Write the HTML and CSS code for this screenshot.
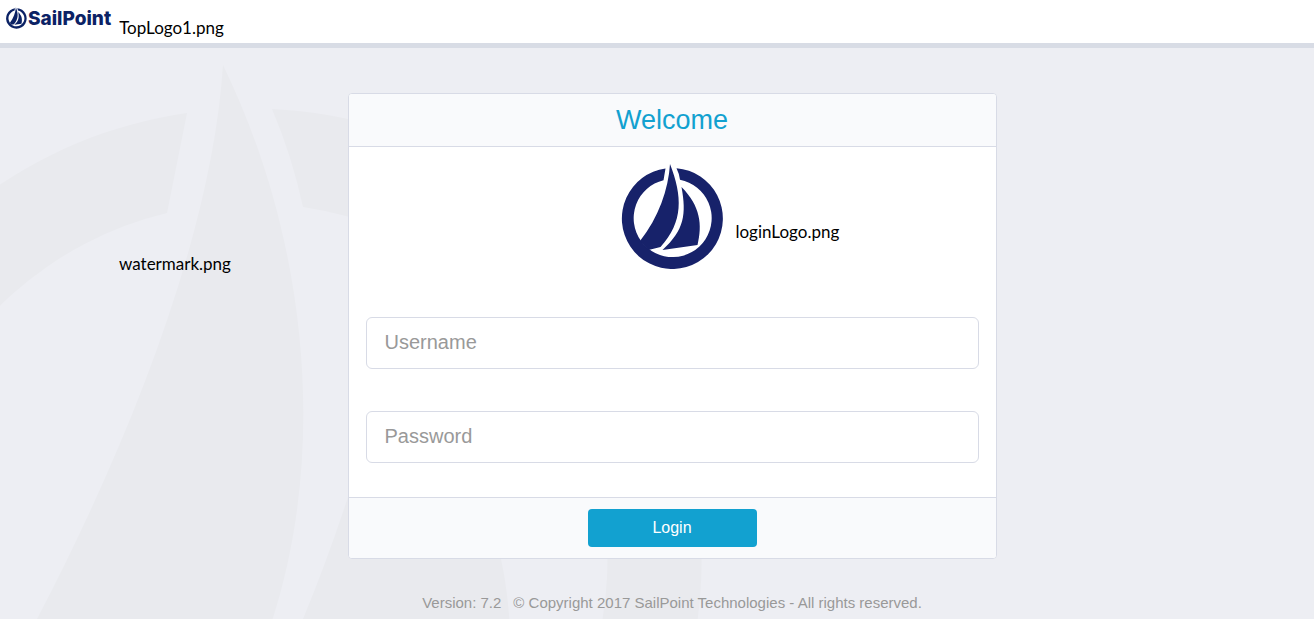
FILE: index.html
```html
<!doctype html>
<html lang="en">
  <head>
    <meta charset="UTF-8" />
    <meta name="viewport" content="width=device-width, initial-scale=1.0" />
    <title>SailPoint Login</title>
    <link rel="stylesheet" href="styles.css">
  </head>
  <body>
    <header class="topbar">
      <a class="brand" href="#" aria-label="SailPoint">
        <svg class="brand-icon" viewBox="-1 0 103 105" aria-hidden="true">
          <use href="#boat" />
        </svg>
        <span>SailPoint</span>
      </a>
      <span class="note">TopLogo1.png</span>
    </header>

    <main class="page">
      <svg class="watermark" viewBox="0 0 710 571" width="710" height="571" aria-hidden="true">
        <path d="M187 65A451 451 0 1 0 272 61Q292 108 303 159A357 357 0 1 1 167 165Z" />
        <path d="M223 17C212 190 125 403 37 571L-40 700H210C328 530 336 250 223 17Z" />
        <path d="M347 452Q327 513 303 571L250 700H500Q520 600 501 511L440 250Q380 350 347 452Z" />
      </svg>
      <span class="note watermark-note">watermark.png</span>

      <form class="card" action="#" method="post">
        <div class="card-header">
          <h1>Welcome</h1>
        </div>
        <div class="card-body">
          <div class="logo">
            <svg class="logo-icon" viewBox="-1 0 102 105" aria-hidden="true">
              <g id="boat">
                <path d="M43 4.500A50.5 50.5 0 1 0 54 4.200Q56.500 9 57.500 15.800A39 39 0 1 1 41 16.200Z" />
                <path d="M47.500 0C46 25 36 54 17.500 77L26 86L38 83C61 58 60 32 47.500 0Z" />
                <path d="M59 23C64 50 62 66 40 86L75 81C80 61 78 42 59 23Z" />
              </g>
            </svg>
            <span class="note logo-note">loginLogo.png</span>
          </div>
          <input type="text" name="username" placeholder="Username" aria-label="Username" />
          <input type="password" name="password" placeholder="Password" aria-label="Password" />
        </div>
        <div class="card-footer">
          <button type="submit">Login</button>
        </div>
      </form>

      <footer class="copyright">
        <span>Version: 7.2</span>
        <span>© Copyright 2017 SailPoint Technologies - All rights reserved.</span>
      </footer>
    </main>
  </body>
</html>
```

FILE: styles.css
```css
* {
  box-sizing: border-box;
}

body {
  margin: 0;
  background: #fff;
  font-family: "Liberation Sans", Arial, sans-serif;
}

.topbar {
  display: flex;
  height: 48px;
  padding: 6px;
  gap: 8px;
  border-bottom: 5px solid #d8dce5;
}

.brand {
  display: flex;
  height: 24px;
  align-items: center;
  gap: 1px;
  color: #0b2265;
  font-family: Inter, sans-serif;
  font-size: 19px;
  font-weight: 800;
  text-decoration: none;
}

.brand-icon {
  width: 21px;
  height: 22px;
  fill: #0b2265;
}

.note {
  color: #000;
  font-family: Lato, sans-serif;
  font-size: 17px;
  line-height: 20px;
}

.topbar .note {
  margin-top: 12px;
}

.page {
  position: relative;
  overflow: hidden;
  padding: 45px 0 6px 30px;
  background: #edeef3;
}

.watermark {
  position: absolute;
  top: 0;
  left: 0;
  fill: #e9eaee;
}

.watermark-note {
  position: absolute;
  top: 206px;
  left: 119px;
}

.card {
  position: relative;
  max-width: 649px;
  margin: 0 auto;
  border: 1px solid #d8dbe6;
  border-radius: 4px;
  background: #fff;
  overflow: hidden;
}

.card-header {
  padding: 10px 16px;
  border-bottom: 1px solid #d8dbe6;
  background: #f9fafc;
}

h1 {
  margin: 0;
  color: #12a1d0;
  font-size: 27px;
  font-weight: 400;
  line-height: 32px;
  text-align: center;
}

.card-body {
  display: flex;
  flex-direction: column;
  gap: 42px;
  padding: 17px 17px 34px;
}

.logo {
  position: relative;
  width: 103px;
  margin: 0 auto 6px;
}

.logo-icon {
  display: block;
  width: 103px;
  height: 105px;
  fill: #17226a;
}

.logo-note {
  position: absolute;
  top: 58px;
  left: 115px;
}

input {
  width: 100%;
  height: 52px;
  padding: 0 18px 2px;
  border: 1px solid #d8dbe6;
  border-radius: 6px;
  background: #fff;
  color: #333;
  font-family: inherit;
  font-size: 20px;
}

input::placeholder {
  color: #999;
}

input:focus {
  border-color: #12a1d0;
  outline: none;
}

.card-footer {
  padding: 11px;
  border-top: 1px solid #d8dbe6;
  background: #f9fafc;
  text-align: center;
}

button {
  display: block;
  width: 169px;
  height: 38px;
  margin: 0 auto;
  border: none;
  border-radius: 4px;
  background: #12a1d0;
  color: #fff;
  font-family: inherit;
  font-size: 16px;
  cursor: pointer;
}

button:hover {
  background: #0f8db6;
}

.copyright {
  position: relative;
  display: flex;
  justify-content: center;
  gap: 12px;
  margin-top: 34px;
  color: #999;
  font-size: 15px;
  line-height: 20px;
}
```
